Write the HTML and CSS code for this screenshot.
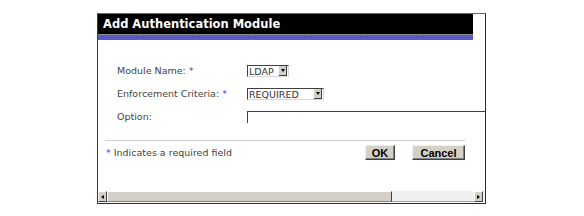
FILE: index.html
```html
<!DOCTYPE html>
<html>
<head>
<meta charset="utf-8">
<link rel="stylesheet" href="styles.css">
</head>
<body>
<div class="window">
  <div class="viewport">
    <div class="titlebar">Add Authentication Module</div>
    <div class="stripe"></div>
    <div class="form">
      <div class="label">Module Name: <span class="req">*</span></div>
      <div class="field">
        <div class="select sel-short"><span class="val">LDAP</span><span class="drop"><i></i></span></div>
      </div>
      <div class="label">Enforcement Criteria: <span class="req">*</span></div>
      <div class="field">
        <div class="select sel-long"><span class="val">REQUIRED</span><span class="drop"><i></i></span></div>
      </div>
      <div class="label">Option:</div>
      <div class="field">
        <div class="textbox"></div>
      </div>
    </div>
    <div class="separator"></div>
    <div class="footer">
      <div class="note"><span class="req">*</span> Indicates a required field</div>
      <div class="buttons">
        <button class="btn btn-ok">OK</button>
        <button class="btn btn-cancel">Cancel</button>
      </div>
    </div>
  </div>
  <div class="hscroll">
    <span class="arrow arrow-left"><i></i></span>
    <span class="thumb"></span>
    <span class="track"></span>
    <span class="arrow arrow-right"><i></i></span>
  </div>
</div>
</body>
</html>
```
FILE: styles.css
```css
html, body {
  margin: 0;
  padding: 0;
  background: #ffffff;
}
body {
  width: 584px;
  height: 216px;
  overflow: hidden;
  font-family: "DejaVu Sans", Verdana, sans-serif;
}
.window {
  margin: 13px 0 0 97px;
  width: 387px;
  border-top: 1px solid #5c5ccc;
  border-left: 1px solid #3a3a3a;
  border-right: 1px solid #2a2a2a;
  border-bottom: 1px solid #2a2a2a;
}
.viewport {
  height: 177px;
  overflow: hidden;
}
.titlebar {
  width: 370px;
  height: 20px;
  padding-left: 5px;
  background: #000000;
  color: #ffffff;
  font-weight: bold;
  font-size: 11.5px;
  line-height: 21px;
  border-bottom: 1px solid #8a8a8a;
  white-space: nowrap;
}
.stripe {
  width: 375px;
  height: 5px;
  background-color: #5a5ac8;
  background-image: repeating-linear-gradient(90deg, transparent 0 3px, rgba(40,40,120,0.35) 3px 4px, transparent 4px 7px);
  background-size: 100% 1px;
  background-position: 0 2px;
  background-repeat: no-repeat;
}
.form {
  display: grid;
  grid-template-columns: 130px 1fr;
  grid-auto-rows: 23px;
  margin-top: 25px;
  padding-left: 19px;
  font-size: 9.5px;
  color: #444444;
}
.label {
  height: 12px;
  line-height: 12px;
  white-space: nowrap;
}
.req {
  color: #3b3bdc;
}
.field {
  height: 12px;
}
.select {
  display: flex;
  align-items: stretch;
  height: 10px;
  border-top: 1px solid #404040;
  border-left: 1px solid #404040;
  border-right: 1px solid #d8d8d8;
  border-bottom: 1px solid #d8d8d8;
  background: #ffffff;
  font-size: 9.5px;
  line-height: 11px;
  color: #333333;
}
.sel-short { width: 40px; }
.sel-long { width: 75px; }
.val {
  flex: 1;
  padding-left: 1px;
  overflow: hidden;
  white-space: nowrap;
}
.drop {
  width: 8px;
  margin: 0 1px 0 0;
  background: #d4d0c8;
  border-right: 1px solid #404040;
  border-bottom: 1px solid #404040;
  box-sizing: border-box;
  display: flex;
  align-items: center;
  justify-content: center;
}
.drop i {
  width: 0;
  height: 0;
  border-left: 2.5px solid transparent;
  border-right: 2.5px solid transparent;
  border-top: 3px solid #000000;
}
.textbox {
  width: 300px;
  height: 11px;
  border-top: 1px solid #404040;
  border-left: 1px solid #404040;
}
.separator {
  margin: 6px 0 0 7px;
  width: 360px;
  height: 1px;
  background: #cfcfcf;
}
.footer {
  display: flex;
  align-items: center;
  justify-content: space-between;
  width: 359px;
  margin-top: 4px;
  padding-left: 8px;
  font-size: 9.5px;
  color: #444444;
}
.note {
  white-space: nowrap;
}
.buttons {
  display: flex;
  gap: 17px;
}
.btn {
  height: 15px;
  padding: 0;
  background: #d4d0c8;
  border-top: 1px solid #f0f0f0;
  border-left: 1px solid #f0f0f0;
  border-right: 1px solid #404040;
  border-bottom: 1px solid #404040;
  box-shadow: inset -1px -1px 0 #808080;
  font-family: "Liberation Sans", Arial, sans-serif;
  font-weight: bold;
  font-size: 11px;
  line-height: 12px;
  color: #000000;
}
.btn-ok { width: 30px; }
.btn-cancel { width: 53px; }
.hscroll {
  display: flex;
  height: 11px;
  margin-bottom: 1px;
  background: #f4f4f4;
}
.arrow {
  width: 9px;
  height: 11px;
  box-sizing: border-box;
  background: #d4d0c8;
  border-top: 1px solid #ffffff;
  border-left: 1px solid #ffffff;
  border-right: 1px solid #404040;
  border-bottom: 1px solid #404040;
  display: flex;
  align-items: center;
  justify-content: center;
}
.arrow-left i {
  width: 0;
  height: 0;
  border-top: 2.5px solid transparent;
  border-bottom: 2.5px solid transparent;
  border-right: 3px solid #000000;
}
.arrow-right i {
  width: 0;
  height: 0;
  border-top: 2.5px solid transparent;
  border-bottom: 2.5px solid transparent;
  border-left: 3px solid #000000;
}
.arrow-right {
  margin-right: 2px;
}
.thumb {
  width: 285px;
  height: 11px;
  box-sizing: border-box;
  background: #d4d0c8;
  border-top: 1px solid #ffffff;
  border-left: 1px solid #ffffff;
  border-right: 1px solid #404040;
  border-bottom: 1px solid #808080;
}
.track {
  flex: 1;
  background: #f0f0f0;
  border-bottom: 1px solid #a0a0a0;
}
```
